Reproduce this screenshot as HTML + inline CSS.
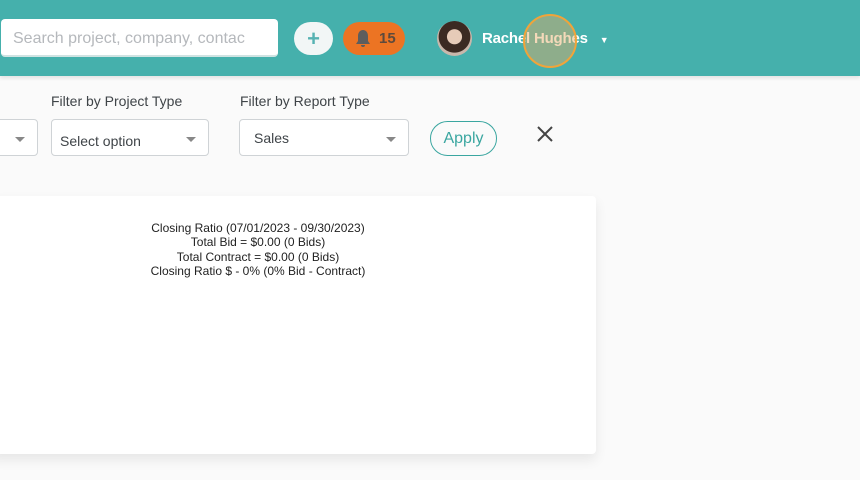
<!DOCTYPE html>
<html><head><style>
body{margin:0;width:860px;height:480px;overflow:hidden;background:#fafafa;font-family:"Liberation Sans",sans-serif;position:relative}
.hdr{position:absolute;left:0;top:0;width:860px;height:76px;background:#45b0ac;box-shadow:0 2px 4px rgba(0,0,0,.1)}
.search{position:absolute;left:1px;top:19px;width:277px;height:38px;background:#fff;border-radius:4px;box-sizing:border-box;padding:11px 12px;color:#b5b8bc;font-size:16px;border-bottom:2px solid #cfe3e2}
.plus{position:absolute;left:294px;top:22px;width:39px;height:33px;border-radius:17px;background:#f2f6f6;color:#56b2b2;font-size:22px;font-weight:bold;text-align:center;line-height:33px}
.bell{position:absolute;left:343px;top:22px;width:62px;height:33px;border-radius:17px;background:#ec7423;color:#5d4a3c;font-weight:bold;font-size:15px;line-height:33px}
.av{position:absolute;left:437px;top:21px;width:35px;height:35px;border-radius:50%;background:radial-gradient(circle at 50% 45%,#e6cbb8 0 28%,#3b2a22 30% 60%,#c9b7ab 62%)}
.name{position:absolute;left:482px;top:30px;color:#fff;font-weight:bold;font-size:15px;letter-spacing:-0.2px}
.circ{position:absolute;left:523px;top:14px;width:50px;height:50px;border-radius:50%;border:2px solid #f0a43a;background:rgba(230,170,100,.45)}
.lbl{position:absolute;top:93px;font-size:14px;color:#3f4448}
.sel{position:absolute;top:119px;height:37px;background:#fff;border:1px solid #cfd3d6;border-radius:4px;box-sizing:border-box;font-size:14px;color:#3f4448;padding:0 8px}
.car{position:absolute;right:12px;top:17px;border:5px solid transparent;border-top:5px solid #888;border-bottom:0}
.apply{position:absolute;left:430px;top:121px;width:67px;height:35px;border:1px solid #3aa6a0;border-radius:18px;box-sizing:border-box;color:#3aa6a0;font-size:16px;text-align:center;line-height:33px}
.x{position:absolute;left:537px;top:126px}
.card{position:absolute;left:-10px;top:196px;width:606px;height:258px;background:#fff;border-radius:4px;box-shadow:0 6px 12px rgba(0,0,0,.08)}
.txt{position:absolute;left:0;top:221px;width:516px;text-align:center;font-size:12px;color:#222;line-height:14.3px}
</style></head><body>
<div class="hdr">
<div class="search">Search project, company, contac</div>
<div class="plus">+</div>
<div class="bell"><svg width="16" height="20" viewBox="0 0 16 20" style="position:absolute;left:12px;top:7px"><path d="M8 1c-3 0-5 2.5-5 6v5l-2 3h14l-2-3V7c0-3.5-2-6-5-6zM6 16a2 2 0 004 0z" fill="#5d5d5d"/></svg><span style="position:absolute;left:36px">15</span></div>
<div class="av"></div>
<div class="name">Rachel Hughes <span style="font-size:9px;margin-left:8px">▼</span></div>
<div class="circ"></div>
</div>
<div class="lbl" style="left:51px">Filter by Project Type</div>
<div class="lbl" style="left:240px">Filter by Report Type</div>
<div class="sel" style="left:-5px;width:43px"><div class="car"></div></div>
<div class="sel" style="left:51px;width:158px;line-height:42px">Select option<div class="car"></div></div>
<div class="sel" style="left:239px;width:170px;padding-left:14px;line-height:36px">Sales<div class="car"></div></div>
<div class="apply">Apply</div>
<svg class="x" width="16" height="16" viewBox="0 0 16 16"><path d="M1 1L15 15M15 1L1 15" stroke="#444" stroke-width="2"/></svg>
<div class="card"></div>
<div class="txt">Closing Ratio (07/01/2023 - 09/30/2023)<br>Total Bid = $0.00 (0 Bids)<br>Total Contract = $0.00 (0 Bids)<br>Closing Ratio $ - 0% (0% Bid - Contract)</div>
</body></html>
